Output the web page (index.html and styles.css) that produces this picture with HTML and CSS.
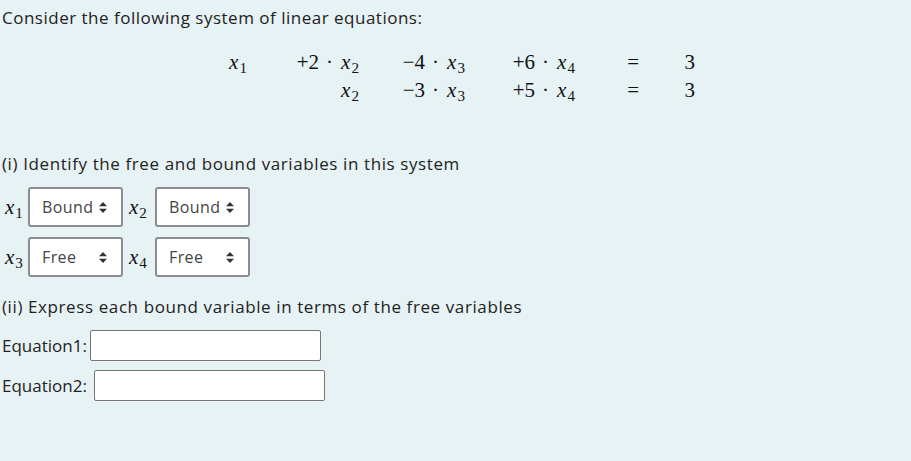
FILE: index.html
```html
<!DOCTYPE html>
<html>
<head>
<meta charset="utf-8">
<link rel="stylesheet" href="styles.css">
</head>
<body>
<div class="page">
  <p class="title">Consider the following system of linear equations:</p>
  <div class="system">
    <span class="c"><i>x</i><sub>1</sub></span>
    <span class="c">+2<span class="op">·</span><i>x</i><sub>2</sub></span>
    <span class="c">−4<span class="op">·</span><i>x</i><sub>3</sub></span>
    <span class="c">+6<span class="op">·</span><i>x</i><sub>4</sub></span>
    <span class="c eq">=</span>
    <span class="c">3</span>
    <span class="c"></span>
    <span class="c"><i>x</i><sub>2</sub></span>
    <span class="c">−3<span class="op">·</span><i>x</i><sub>3</sub></span>
    <span class="c">+5<span class="op">·</span><i>x</i><sub>4</sub></span>
    <span class="c eq">=</span>
    <span class="c">3</span>
  </div>
  <p class="q q1">(i) Identify the free and bound variables in this system</p>
  <div class="selrow">
    <span class="var"><i>x</i><sub>1</sub></span>
    <div class="sel"><span>Bound</span><svg width="8" height="11" viewBox="0 0 8 11"><path d="M4 0L8 4.2H0Z M4 11L8 6.8H0Z" fill="#333"/></svg></div>
    <span class="var"><i>x</i><sub>2</sub></span>
    <div class="sel"><span>Bound</span><svg width="8" height="11" viewBox="0 0 8 11"><path d="M4 0L8 4.2H0Z M4 11L8 6.8H0Z" fill="#333"/></svg></div>
  </div>
  <div class="selrow">
    <span class="var"><i>x</i><sub>3</sub></span>
    <div class="sel"><span>Free</span><svg width="8" height="11" viewBox="0 0 8 11"><path d="M4 0L8 4.2H0Z M4 11L8 6.8H0Z" fill="#333"/></svg></div>
    <span class="var"><i>x</i><sub>4</sub></span>
    <div class="sel"><span>Free</span><svg width="8" height="11" viewBox="0 0 8 11"><path d="M4 0L8 4.2H0Z M4 11L8 6.8H0Z" fill="#333"/></svg></div>
  </div>
  <p class="q q2">(ii) Express each bound variable in terms of the free variables</p>
  <div class="eqrow"><label class="l1">Equation1:</label><input type="text" class="box"></div>
  <div class="eqrow"><label class="l2">Equation2:</label><input type="text" class="box"></div>
</div>
</body>
</html>
```
FILE: styles.css
```css
html, body {
  margin: 0;
  padding: 0;
  background: #e7f2f4;
}
.page {
  width: 911px;
  height: 461px;
  padding: 7px 0 0 2px;
  box-sizing: border-box;
  font-family: "Open Sans", sans-serif;
  font-size: 17px;
  letter-spacing: 0.5px;
  color: #222;
}
p { margin: 0; }
.title {
  line-height: 22px;
}
.system {
  display: grid;
  grid-template-columns: 47px 112px 106px 110px 64px 56px;
  grid-auto-rows: 28px;
  align-items: center;
  margin: 19px 0 0 198px;
  font-family: "Liberation Serif", serif;
  font-size: 21px;
  letter-spacing: 0;
  color: #111;
}
.system .c {
  text-align: right;
  white-space: nowrap;
  line-height: 28px;
}
.op {
  margin: 0 8px 0 7px;
}
i { font-style: italic; }
sub {
  font-size: 0.72em;
  vertical-align: -0.25em;
  line-height: 0;
  margin-left: 1px;
}
.q1 {
  margin-top: 49px;
  line-height: 22px;
  letter-spacing: 0.6px;
}
.selrow {
  display: flex;
  align-items: center;
  height: 40px;
  margin-top: 12px;
}
.selrow + .selrow { margin-top: 10px; }
.var {
  box-sizing: border-box;
  font-family: "Liberation Serif", serif;
  font-size: 21px;
  letter-spacing: 0;
  color: #111;
  width: 26px;
  padding-left: 3px;
  line-height: 40px;
}
.sel + .var {
  width: 32px;
  padding-left: 6px;
}
.sel {
  width: 95px;
  height: 40px;
  box-sizing: border-box;
  border: 2px solid #8a8d90;
  border-radius: 3px;
  background: #fff;
  display: flex;
  align-items: center;
  justify-content: space-between;
  padding: 0 14px 0 12px;
  font-size: 16px;
  letter-spacing: 0.4px;
  color: #444;
}
.q2 {
  margin-top: 19px;
  line-height: 22px;
  letter-spacing: 0.6px;
}
.eqrow {
  display: flex;
  align-items: center;
  margin-top: 12px;
  height: 31px;
}
.eqrow + .eqrow { margin-top: 9px; }
.eqrow label {
  color: #222;
  letter-spacing: 0;
}
.l1 { width: 88px; }
.l2 { width: 92px; }
.box {
  width: 231px;
  height: 31px;
  box-sizing: border-box;
  border: 1px solid #767676;
  border-radius: 2px;
  background: #fff;
  margin: 0;
  padding: 0;
}
```
